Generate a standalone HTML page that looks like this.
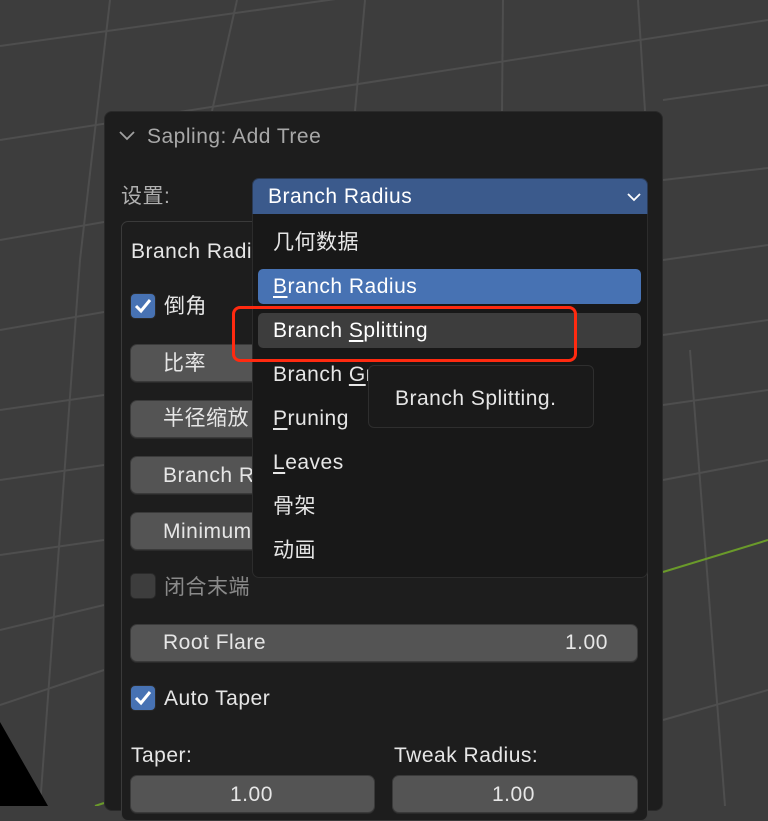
<!DOCTYPE html>
<html><head><meta charset="utf-8"><style>
*{margin:0;padding:0;box-sizing:border-box}
body{width:768px;height:806px;overflow:hidden;background:#3d3d3d;position:relative;font-family:"Liberation Sans","Noto Sans CJK SC",sans-serif;font-size:21px;letter-spacing:0.5px;line-height:28px;color:#e6e6e6}
.a{position:absolute;white-space:nowrap}
.btn{position:absolute;background:#545454;border:1px solid #3a3a3a;border-radius:7px;height:38px;box-shadow:0 1px 0 #2a2a2a}
.cb{position:absolute;width:26px;height:26px;border-radius:5px;background:#4772b3;border:1px solid #2a2a2a}
.u{text-decoration:underline;text-underline-offset:3px}
</style></head><body>
<svg class="a" style="left:0;top:0" width="768" height="806">
<g stroke="#4e4e4e" stroke-width="2" fill="none">
<line x1="0" y1="46" x2="400" y2="-10"/>
<line x1="0" y1="140" x2="768" y2="20"/>
<line x1="0" y1="240" x2="104" y2="222"/>
<line x1="0" y1="330" x2="104" y2="312"/>
<line x1="0" y1="410" x2="104" y2="395"/>
<line x1="0" y1="480" x2="104" y2="465"/>
<line x1="0" y1="555" x2="104" y2="540"/>
<line x1="0" y1="630" x2="104" y2="605"/>
<line x1="0" y1="705" x2="104" y2="670"/>
<line x1="663" y1="100" x2="768" y2="85"/>
<line x1="663" y1="180" x2="768" y2="168"/>
<line x1="663" y1="260" x2="768" y2="245"/>
<line x1="663" y1="335" x2="768" y2="320"/>
<line x1="663" y1="405" x2="768" y2="390"/>
<line x1="663" y1="480" x2="768" y2="460"/>
<line x1="663" y1="720" x2="768" y2="690"/>
<line x1="110" y1="0" x2="80" y2="260"/>
<line x1="237" y1="0" x2="212" y2="111"/>
<line x1="365" y1="0" x2="355" y2="111"/>
<line x1="503" y1="0" x2="502" y2="111"/>
<line x1="638" y1="0" x2="645" y2="111"/>
<line x1="690" y1="350" x2="725" y2="806"/>
<line x1="80" y1="260" x2="40" y2="806"/>
</g>
<line x1="663" y1="572" x2="768" y2="540" stroke="#6a9a2a" stroke-width="2"/>
<line x1="95" y1="806" x2="104" y2="803" stroke="#6a9a2a" stroke-width="2"/>
<polygon points="0,722 48,806 0,806" fill="#000"/>
</svg>
<div class="a" style="left:104px;top:111px;width:559px;height:700px;background:#1d1d1d;border:1px solid #2a2a2a;border-radius:8px"></div>
<svg class="a" style="left:118px;top:129px" width="18" height="14"><path d="M2 3 L9 10 L16 3" stroke="#a0a0a0" stroke-width="1.8" fill="none"/></svg>
<div class="a" style="left:147px;top:123px;color:#a8a8a8">Sapling: Add Tree</div>
<div class="a" style="left:121px;top:183px;color:#b0b0b0">设置:</div>
<div class="a" style="left:121px;top:221px;width:527px;height:600px;border:1px solid #3a3a3a;border-radius:7px;background:#1d1d1d"></div>
<div class="a" style="left:131px;top:238px">Branch Radi</div>
<div class="cb" style="left:130px;top:293px"></div>
<svg class="a" style="left:133px;top:296px" width="20" height="20"><path d="M3 10 L8 15 L17 4" stroke="#fff" stroke-width="3" fill="none"/></svg>
<div class="a" style="left:164px;top:293px">倒角</div>
<div class="btn" style="left:130px;top:344px;width:508px"></div><div class="a" style="left:163px;top:350px">比率</div>
<div class="btn" style="left:130px;top:400px;width:508px"></div><div class="a" style="left:163px;top:405px">半径缩放</div>
<div class="btn" style="left:130px;top:456px;width:508px"></div><div class="a" style="left:163px;top:462px">Branch R</div>
<div class="btn" style="left:130px;top:512px;width:508px"></div><div class="a" style="left:163px;top:518px">Minimum</div>
<div class="a" style="left:130px;top:573px;width:26px;height:26px;border-radius:5px;background:#3d3d3d;border:1px solid #2a2a2a"></div>
<div class="a" style="left:164px;top:574px;color:#8a8a8a">闭合末端</div>
<div class="btn" style="left:130px;top:624px;width:508px"></div>
<div class="a" style="left:163px;top:629px">Root Flare</div><div class="a" style="left:565px;top:629px">1.00</div>
<div class="cb" style="left:130px;top:685px"></div>
<svg class="a" style="left:133px;top:688px" width="20" height="20"><path d="M3 10 L8 15 L17 4" stroke="#fff" stroke-width="3" fill="none"/></svg>
<div class="a" style="left:164px;top:685px">Auto Taper</div>
<div class="a" style="left:131px;top:742px">Taper:</div>
<div class="a" style="left:394px;top:742px">Tweak Radius:</div>
<div class="btn" style="left:130px;top:775px;width:245px"></div><div class="a" style="left:230px;top:781px">1.00</div>
<div class="btn" style="left:392px;top:775px;width:246px"></div><div class="a" style="left:492px;top:781px">1.00</div>
<div class="a" style="left:252px;top:178px;width:396px;height:38px;background:#3b5a8c;border-radius:7px 7px 0 0;border:1px solid #2a3a55"></div>
<div class="a" style="left:268px;top:183px;color:#fff">Branch Radius</div>
<svg class="a" style="left:626px;top:191px" width="16" height="12"><path d="M2 3 L8 9 L14 3" stroke="#fff" stroke-width="1.8" fill="none"/></svg>
<div class="a" style="left:252px;top:214px;width:396px;height:364px;background:#181818;border:1px solid #2c2c2c;border-top:none;border-radius:0 0 7px 7px"></div>
<div class="a" style="left:273px;top:229px">几何数据</div>
<div class="a" style="left:258px;top:269px;width:383px;height:35px;background:#4772b3;border-radius:5px"></div>
<div class="a" style="left:273px;top:273px;color:#fff"><span class="u">B</span>ranch Radius</div>
<div class="a" style="left:258px;top:313px;width:383px;height:35px;background:#3d3d3d;border-radius:5px"></div>
<div class="a" style="left:273px;top:317px;color:#fff">Branch <span class="u">S</span>plitting</div>
<div class="a" style="left:273px;top:361px">Branch <span class="u">G</span>rowth</div>
<div class="a" style="left:273px;top:405px"><span class="u">P</span>runing</div>
<div class="a" style="left:273px;top:449px"><span class="u">L</span>eaves</div>
<div class="a" style="left:273px;top:493px">骨架</div>
<div class="a" style="left:273px;top:537px">动画</div>
<div class="a" style="left:232px;top:306px;width:345px;height:56px;border:3px solid #ff2a10;border-radius:8px"></div>
<div class="a" style="left:368px;top:365px;width:226px;height:63px;background:#1a1a1a;border:1px solid #2e2e2e;border-radius:6px"></div>
<div class="a" style="left:395px;top:385px">Branch Splitting.</div>
</body></html>
